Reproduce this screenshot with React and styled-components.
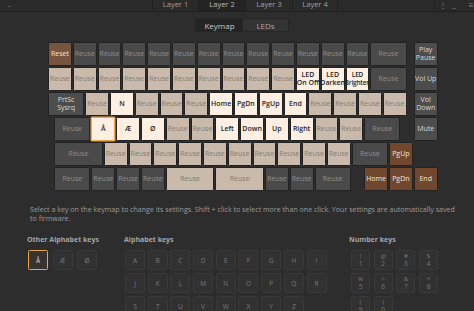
import React from "react";
import styled, { createGlobalStyle, css } from "styled-components";

const P = 24.8; // key pitch
const GAP = 1;

const Global = createGlobalStyle`
  html, body { margin: 0; padding: 0; background: #2d2d2d; }
  body { font-family: "Open Sans", "Noto Sans", sans-serif; overflow: hidden; }
  * { box-sizing: border-box; }
`;

const Page = styled.div`
  width: 474px;
  height: 311px;
  background: #2d2d2d;
  display: flex;
  flex-direction: column;
  overflow: hidden;
`;

const TopBar = styled.div`
  height: 13px;
  display: flex;
  align-items: stretch;
  background: #2a2a2a;
  border-bottom: 1px solid #1f1f1f;
  color: #a5a5a5;
  font-size: 7.5px;
  line-height: 9px;
`;

const BackBtn = styled.div`
  width: 20px;
  display: flex;
  align-items: center;
  justify-content: center;
  color: #777;
  font-size: 8px;
  padding-bottom: 2px;
`;

const Tabs = styled.div`
  display: flex;
  margin-left: 132px;
`;

const Tab = styled.div`
  width: ${(p) => p.$w}px;
  display: flex;
  align-items: center;
  justify-content: center;
  padding-bottom: 2px;
  border-left: 1px solid #222;
  ${(p) => p.$last && css`border-right: 1px solid #222;`}
  background: ${(p) => (p.$active ? "#242424" : "transparent")};
  color: ${(p) => (p.$active ? "#bdbdbd" : "#a0a0a0")};
`;

const WinControls = styled.div`
  margin-left: auto;
  display: flex;
  align-items: center;
  gap: 11px;
  color: #8a8a8a;
  font-size: 8px;
  padding-bottom: 2px;
`;

const Ctl = styled.span`
  display: inline-block;
  width: ${(p) => p.$w || 6}px;
  text-align: center;
  ${(p) => p.$sep && css`border-left: 1px solid #222; padding-left: 4px;`}
`;

const SegWrap = styled.div`
  display: flex;
  padding-left: 195px;
  margin-top: 6px;
`;

const Seg = styled.div`
  display: flex;
  border: 1px solid #262626;
  height: 14px;
`;

const SegItem = styled.div`
  width: ${(p) => p.$w}px;
  display: flex;
  align-items: center;
  justify-content: center;
  font-size: 8px;
  background: ${(p) => (p.$active ? "#242424" : "#333333")};
  color: ${(p) => (p.$active ? "#c8c8c8" : "#a8a8a8")};
`;

const Keyboard = styled.div`
  display: flex;
  margin-top: 10px;
  padding-left: 48px;
`;

const Main = styled.div`
  width: ${14.75 * P}px;
  display: flex;
  flex-direction: column;
  gap: ${GAP}px;
`;

const Side = styled.div`
  display: flex;
  flex-direction: column;
  gap: ${GAP}px;
`;

const Row = styled.div`
  display: flex;
  gap: ${GAP}px;
  height: 24px;
  padding-left: ${(p) => p.$offset * P}px;
`;

const variants = {
  dark: css`background: #4a4a4a; color: #8e8e8e;`,
  label: css`background: #4d4d4d; color: #dadada;`,
  beige: css`background: #c9baac; color: #877a70;`,
  cream: css`background: #fdf0e2; color: #2a2522; font-weight: 600;`,
  brown: css`background: #71482e; color: #f3e4d6;`,
  reset: css`background: #76553e; color: #f3e4d6;`,
};

const Key = styled.div`
  width: ${(p) => p.$w * P - GAP}px;
  height: 24px;
  flex: none;
  display: flex;
  align-items: center;
  justify-content: center;
  text-align: center;
  border: 1px solid #222;
  border-radius: 1.5px;
  font-size: ${(p) => (p.$small ? 6.4 : 7)}px;
  letter-spacing: ${(p) => (p.$small ? -0.15 : 0)}px;
  line-height: 8px;
  white-space: pre;
  ${(p) => variants[p.$v]}
  ${(p) =>
    p.$sel &&
    css`
      border: 1px solid #f0a648;
      box-shadow: 0 0 0 0.5px #f0a648;
    `}
`;

const Spacer = styled.div`
  width: ${(p) => p.$w * P - GAP}px;
  height: 24px;
  flex: none;
`;

const R = (n, v, w = 1) => Array.from({ length: n }, () => ({ l: "Reuse", v, w }));

const rows = [
  {
    offset: 0,
    keys: [{ l: "Reset", v: "reset" }, ...R(12, "dark"), { l: "Reuse", v: "dark", w: 1.5 }],
  },
  {
    offset: 0,
    keys: [
      ...R(10, "beige"),
      { l: "LED\nOn Off", v: "cream" },
      { l: "LED\nDarken", v: "cream" },
      { l: "LED\nBrighten", v: "cream", small: true },
      { l: "Reuse", v: "dark", w: 1.5 },
    ],
  },
  {
    offset: 0,
    keys: [
      { l: "PrtSc\nSysrq", v: "label", w: 1.5 },
      ...R(1, "beige"),
      { l: "N", v: "cream" },
      ...R(3, "beige"),
      { l: "Home", v: "cream" },
      { l: "PgDn", v: "cream" },
      { l: "PgUp", v: "cream" },
      { l: "End", v: "cream" },
      ...R(4, "beige"),
    ],
  },
  {
    offset: 0.25,
    keys: [
      { l: "Reuse", v: "dark", w: 1.5 },
      { l: "Å", v: "cream", sel: true },
      { l: "Æ", v: "cream" },
      { l: "Ø", v: "cream" },
      ...R(2, "beige"),
      { l: "Left", v: "cream" },
      { l: "Down", v: "cream" },
      { l: "Up", v: "cream" },
      { l: "Right", v: "cream" },
      ...R(2, "beige"),
      { l: "Reuse", v: "dark", w: 1.5 },
    ],
  },
  {
    offset: 0.25,
    keys: [
      { l: "Reuse", v: "dark", w: 2 },
      ...R(10, "beige"),
      { l: "Reuse", v: "dark", w: 1.5 },
      { l: "PgUp", v: "brown" },
    ],
  },
  {
    offset: 0.25,
    keys: [
      { l: "Reuse", v: "dark", w: 1.5 },
      ...R(3, "dark"),
      { l: "Reuse", v: "beige", w: 2 },
      { l: "Reuse", v: "beige", w: 2 },
      ...R(2, "dark"),
      { l: "Reuse", v: "dark", w: 1.5 },
      { spacer: true, w: 0.5 },
      { l: "Home", v: "brown" },
      { l: "PgDn", v: "brown" },
    ],
  },
];

const side = [
  { l: "Play\nPause", v: "label" },
  { l: "Vol Up", v: "label" },
  { l: "Vol\nDown", v: "label" },
  { l: "Mute", v: "label" },
  null,
  { l: "End", v: "brown" },
];

const Help = styled.p`
  margin: 14px 0 0 30px;
  width: 426px;
  font-size: 7.1px;
  line-height: 9px;
  color: #9b9b9b;
`;

const Sections = styled.div`
  display: flex;
  padding-left: 27px;
  margin-top: 12px;
`;

const Section = styled.div`
  width: ${(p) => p.$w}px;
  flex: none;
  display: flex;
  flex-direction: column;
`;

const Heading = styled.div`
  font-size: 7px;
  font-weight: 700;
  color: #a5a5a5;
  line-height: 9px;
  margin-bottom: 6px;
`;

const Grid = styled.div`
  display: grid;
  grid-template-columns: repeat(${(p) => p.$cols}, ${(p) => p.$cell}px);
  column-gap: ${(p) => p.$gap}px;
  row-gap: 3px;
  padding-left: ${(p) => p.$pad || 0}px;
`;

const Cell = styled.div`
  height: 20px;
  display: flex;
  flex-direction: column;
  align-items: center;
  justify-content: center;
  background: #313131;
  border: 1px solid #393939;
  border-radius: 1.5px;
  color: #7a7a7a;
  font-size: 6.5px;
  line-height: 7px;
  ${(p) =>
    p.$sel &&
    css`
      border: 1.5px solid #e9a44b;
      background: #363330;
      color: #dcdcdc;
    `}
`;

const Sym = styled.span`
  font-size: 6px;
  line-height: 7px;
`;

const letters = "ABCDEFGHIJKLMNOPQRSTUVWXYZ".split("");
const numbers = [
  ["!", "1"], ["@", "2"], ["#", "3"], ["$", "4"],
  ["%", "5"], ["^", "6"], ["&", "7"], ["*", "8"],
  ["(", "9"], [")", "0"],
];

export default function App() {
  return (
    <Page>
      <Global />
      <TopBar>
        <BackBtn>←</BackBtn>
        <Tabs>
          <Tab $w={46}>Layer 1</Tab>
          <Tab $w={47} $active>Layer 2</Tab>
          <Tab $w={47}>Layer 3</Tab>
          <Tab $w={46} $last>Layer 4</Tab>
        </Tabs>
        <WinControls>
          <Ctl $sep>⋮</Ctl>
          <Ctl>_</Ctl>
          <Ctl>≡</Ctl>
        </WinControls>
      </TopBar>

      <SegWrap>
        <Seg>
          <SegItem $w={47} $active>Keymap</SegItem>
          <SegItem $w={45}>LEDs</SegItem>
        </Seg>
      </SegWrap>

      <Keyboard>
        <Main>
          {rows.map((row, i) => (
            <Row key={i} $offset={row.offset}>
              {row.keys.map((k, j) =>
                k.spacer ? (
                  <Spacer key={j} $w={k.w} />
                ) : (
                  <Key key={j} $w={k.w || 1} $v={k.v} $sel={k.sel} $small={k.small}>
                    {k.l}
                  </Key>
                )
              )}
            </Row>
          ))}
        </Main>
        <Side>
          {side.map((k, i) =>
            k ? (
              <Key key={i} $w={1} $v={k.v}>
                {k.l}
              </Key>
            ) : (
              <Spacer key={i} $w={1} />
            )
          )}
        </Side>
      </Keyboard>

      <Help>
        Select a key on the keymap to change its settings. Shift + click to select more than one click. Your settings are automatically saved to firmware.
      </Help>

      <Sections>
        <Section $w={97}>
          <Heading>Other Alphabet keys</Heading>
          <Grid $cols={3} $cell={20} $gap={4.5} $pad={1}>
            <Cell $sel>Å</Cell>
            <Cell>Æ</Cell>
            <Cell>Ø</Cell>
          </Grid>
        </Section>
        <Section $w={225}>
          <Heading>Alphabet keys</Heading>
          <Grid $cols={9} $cell={20} $gap={2.7} $pad={1}>
            {letters.map((l) => (
              <Cell key={l}>{l}</Cell>
            ))}
          </Grid>
        </Section>
        <Section $w={110}>
          <Heading>Number keys</Heading>
          <Grid $cols={4} $cell={19} $gap={3.7} $pad={2}>
            {numbers.map(([s, n]) => (
              <Cell key={n}>
                <Sym>{s}</Sym>
                <span>{n}</span>
              </Cell>
            ))}
          </Grid>
        </Section>
      </Sections>
    </Page>
  );
}
